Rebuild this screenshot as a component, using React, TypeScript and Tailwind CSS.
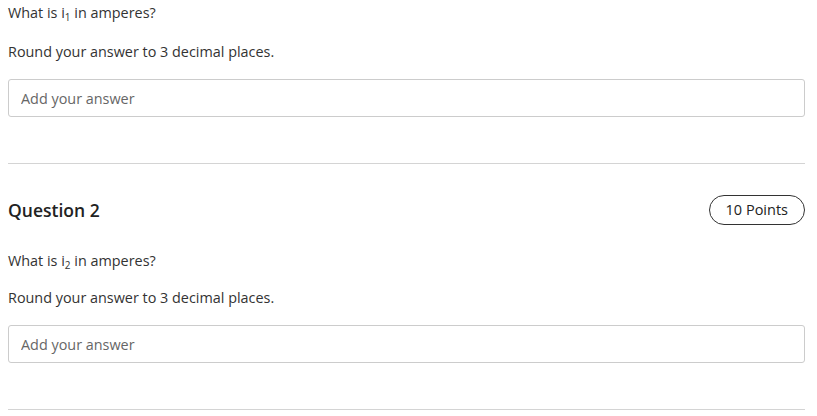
import React from 'react';

const Question: React.FC<{ n: string; gap?: string }> = ({ n, gap = 'mt-[21px]' }) => (
  <div>
    <p className="text-[14.4px] leading-[18px] text-[#333]">
      What is i<sub className="text-[10px]">{n}</sub> in amperes?
    </p>
    <p className={`${gap} text-[14.4px] leading-[18px] text-[#333]`}>Round your answer to 3 decimal places.</p>
    <input
      className="mt-[18px] block h-[38px] w-full rounded-[3px] border border-[#ccc] px-3 text-[14.4px] text-[#333] placeholder:text-[#666] outline-none"
      placeholder="Add your answer"
    />
  </div>
);

export default function App() {
  return (
    <div className="bg-white pl-2 pr-3" style={{ fontFamily: '"Open Sans", "Liberation Sans", sans-serif' }}>
      <div className="pt-[4px]">
        <Question n="1" />
      </div>
      <div className="mt-[46px] border-t border-[#d4d4d4]" />
      <div className="mt-[31px] flex items-center justify-between">
        <h2 className="text-[17.5px] font-semibold text-[#222]">Question 2</h2>
        <span className="flex h-[30px] items-center rounded-full border border-[#333] px-[16px] text-[14.5px] text-[#222]">
          10 Points
        </span>
      </div>
      <div className="mt-[27px]">
        <Question n="2" gap="mt-[19px]" />
      </div>
      <div className="mt-[46px] border-t border-[#d4d4d4]" />
    </div>
  );
}
